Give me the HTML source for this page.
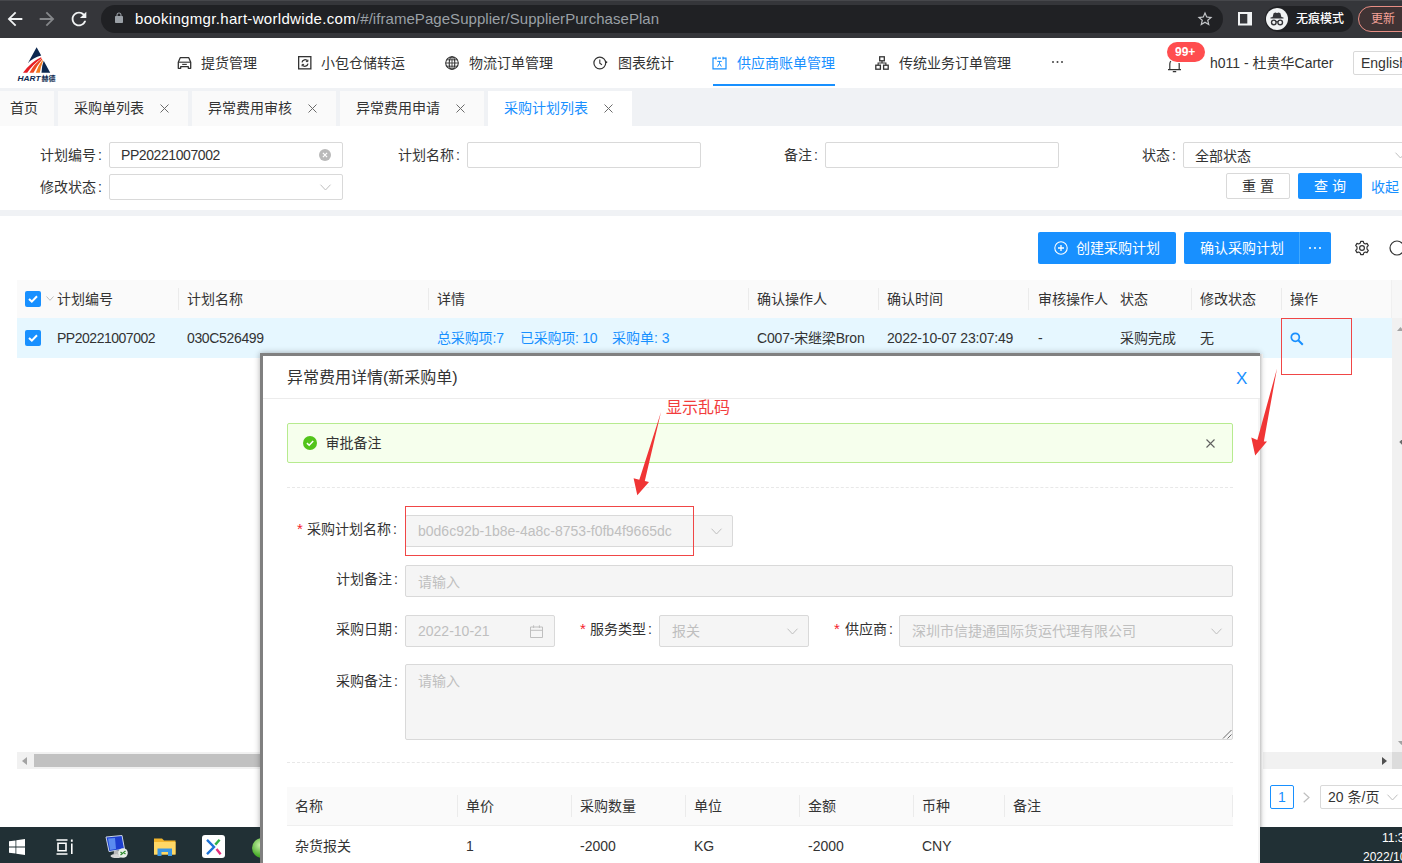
<!DOCTYPE html>
<html lang="zh-CN">
<head>
<meta charset="utf-8">
<title>采购计划列表</title>
<style>
*{box-sizing:border-box;margin:0;padding:0}
html,body{width:1402px;height:863px;overflow:hidden;background:#fff}
body{position:relative;font-family:"Liberation Sans","Noto Sans CJK SC",sans-serif;font-size:14px;color:#333;line-height:20px}
.a{position:absolute;white-space:nowrap}
.t{position:absolute;white-space:nowrap;font-size:14px;line-height:20px;height:20px}
.c{margin-left:2px}
.k{display:inline-block;color:inherit;white-space:nowrap}
.blue{color:#1890ff}
.ph{color:#bfbfbf}
.red{color:#f5222d}
.inp{position:absolute;border:1px solid #d9d9d9;border-radius:2px;background:#fff}
.dis{position:absolute;border:1px solid #d9d9d9;border-radius:2px;background:#f5f5f5}
.sep{position:absolute;width:1px;background:#ebebeb}
svg{position:absolute;display:block;overflow:visible}
</style>
</head>
<body>

<!-- ===== Browser chrome ===== -->
<div class="a" id="chrome" style="left:0;top:0;width:1402px;height:38px;background:#35363a"></div>
<div class="a" style="left:0;top:0;width:1402px;height:1px;background:#46474b"></div>
<svg style="left:4px;top:8px" width="22" height="22" viewBox="0 0 24 24"><path fill="#f1f3f4" d="M20 11H7.83l5.59-5.59L12 4l-8 8 8 8 1.41-1.41L7.83 13H20v-2z"/></svg>
<svg style="left:36px;top:8px" width="22" height="22" viewBox="0 0 24 24"><path fill="#85878a" d="M4 11h12.17l-5.59-5.59L12 4l8 8-8 8-1.41-1.41L16.17 13H4v-2z"/></svg>
<svg style="left:68px;top:8px" width="22" height="22" viewBox="0 0 24 24"><path fill="#f1f3f4" d="M17.65 6.35C16.2 4.9 14.21 4 12 4c-4.42 0-7.99 3.58-7.99 8s3.57 8 7.99 8c3.73 0 6.84-2.55 7.73-6h-2.08c-.82 2.33-3.04 4-5.65 4-3.31 0-6-2.69-6-6s2.69-6 6-6c1.66 0 3.14.69 4.22 1.78L13 11h7V4l-2.35 2.35z"/></svg>
<div class="a" style="left:101px;top:5px;width:1122px;height:28px;border-radius:14px;background:#202124"></div>
<svg style="left:113px;top:12px" width="12" height="12" viewBox="0 0 24 24"><path fill="#9aa0a6" d="M18 8h-1V6c0-2.76-2.24-5-5-5S7 3.24 7 6v2H6c-1.1 0-2 .9-2 2v10c0 1.1.9 2 2 2h12c1.1 0 2-.9 2-2V10c0-1.1-.9-2-2-2zM9 6c0-1.66 1.34-3 3-3s3 1.340 3 3v2H9V6z"/></svg>
<div class="t" id="url" style="left:135px;top:8px;font-size:15px;line-height:22px;height:22px;color:#9aa0a6"><span id="url1" style="color:#fff;letter-spacing:0.32px">bookingmgr.hart-worldwide.com</span><span id="url2" style="letter-spacing:0.05px">/#/iframePageSupplier/SupplierPurchasePlan</span></div>
<svg style="left:1196px;top:10px" width="18" height="18" viewBox="0 0 24 24"><path fill="#c4c7ca" d="M22 9.24l-7.19-.62L12 2 9.190 8.630 2 9.240l5.460 4.730L5.820 21 12 17.270 18.180 21l-1.630-7.030L22 9.240zM12 15.400l-3.760 2.270 1-4.280-3.320-2.880 4.380-.38L12 6.100l1.710 4.040 4.380.38-3.320 2.880 1 4.280L12 15.400z"/></svg>
<svg style="left:1238px;top:12px" width="14" height="14" viewBox="0 0 14 14"><rect x="1" y="1" width="12" height="11.500" fill="none" stroke="#f1f3f4" stroke-width="2"/><rect x="9.300" y="1" width="3.700" height="11.500" fill="#f1f3f4"/></svg>
<div class="a" style="left:1265px;top:6px;width:88px;height:26px;border-radius:13px;background:#202124"></div>
<div class="a" style="left:1266px;top:8px;width:22px;height:22px;border-radius:11px;background:#f1f3f4"></div>
<svg style="left:1269px;top:11px" width="16" height="16" viewBox="0 0 16 16"><path fill="#35363a" d="M4.600 2.200 L6.200 1.400 L8 2 L9.800 1.400 L11.400 2.200 L12.400 6 L14.500 6.600 L14.500 7.600 L1.500 7.600 L1.500 6.600 L3.600 6 Z"/><circle cx="4.800" cy="11.400" r="2.300" fill="none" stroke="#35363a" stroke-width="1.400"/><circle cx="11.200" cy="11.400" r="2.300" fill="none" stroke="#35363a" stroke-width="1.400"/><path d="M7 11 Q8 10.200 9 11" fill="none" stroke="#35363a" stroke-width="1.200"/></svg>
<div class="t" id="incog" style="left:1296px;top:9px;font-size:12px;color:#fff;font-weight:500"><span class="k" style="width:48px">无痕模式</span></div>
<div class="a" style="left:1358px;top:6px;width:60px;height:26px;border-radius:13px;border:1px solid #e88e84;background:#403334"></div>
<div class="t" id="upd" style="left:1371px;top:9px;font-size:12px;color:#f4a198"><span class="k" style="width:24px">更新</span></div>

<!-- ===== App header ===== -->
<div class="a" style="left:0;top:38px;width:1402px;height:50px;background:#fff;box-shadow:0 1px 3px rgba(0,21,41,.10)"></div>
<svg style="left:16px;top:45px" width="42" height="40" viewBox="16 45 42 40">
<path fill="#0d2850" d="M36.600 47.200 L41.200 55.600 Q33 58 28 63 Z"/>
<path fill="#0d2850" d="M43.700 60.700 L50.200 72.800 L41.500 72.800 Q41.600 66 43.700 60.700 Z"/>
<path fill="#e61f26" d="M23 72.800 Q31 62 41 57.300 L41.600 58.200 Q33 64 27.200 72.800 Z"/>
<path fill="#ee4a23" d="M29.400 72.800 Q34.500 63.500 41.900 58.600 L42.300 59.600 Q37 65.500 33.500 72.800 Z"/>
<path fill="#f47b20" d="M35.800 72.800 Q38.500 65 42.500 60 L43 61 Q40.800 66.500 39.800 72.800 Z"/>
<text x="17.600" y="81.400" font-family="Liberation Sans, sans-serif" font-size="7.600" font-weight="bold" font-style="italic" fill="#0d2850" textLength="23" lengthAdjust="spacingAndGlyphs">HART</text>
<text x="41.600" y="81.300" font-family="Liberation Sans, Noto Sans CJK SC, sans-serif" font-size="7" font-weight="bold" fill="#0d2850">赫德</text>
</svg>
<!-- menu 1: car -->
<svg style="left:177px;top:56px" width="15" height="14" viewBox="0 0 15 14" fill="none" stroke="#333" stroke-width="1.300"><path d="M1.300 6.200 L3.200 1.700 H11.800 L13.700 6.200 V12.300 H11.300 V10.600 H3.700 V12.300 H1.300 Z" stroke-linejoin="round"/><path d="M1.300 6.200 H13.700" stroke-width="1.100"/><path d="M5.200 8.400 H9.800" stroke-width="1.100"/></svg>
<div class="t" id="m1" style="left:201px;top:53px"><span class="k" style="width:56px">提货管理</span></div>
<!-- menu 2: sync box -->
<svg style="left:298px;top:56px" width="14" height="14" viewBox="0 0 14 14" fill="none" stroke="#333" stroke-width="1.300"><rect x="0.650" y="0.650" width="12.200" height="12.200"/><path d="M4 6.300 A3 3 0 0 1 9.600 5.300 M10 7.700 A3 3 0 0 1 4.400 8.700" stroke-width="1.200"/><path d="M9.900 3.600 V5.600 H7.900 M4.100 10.400 V8.400 H6.100" stroke-width="1"/></svg>
<div class="t" id="m2" style="left:321px;top:53px"><span class="k" style="width:84px">小包仓储转运</span></div>
<!-- menu 3: globe -->
<svg style="left:445px;top:56px" width="14" height="14" viewBox="0 0 14 14" fill="none" stroke="#333" stroke-width="1.100"><circle cx="7" cy="7" r="6.300"/><ellipse cx="7" cy="7" rx="2.800" ry="6.300"/><path d="M7 .7 V13.300 M.7 7 H13.300 M1.600 3.800 H12.400 M1.600 10.200 H12.400" stroke-width=".9"/></svg>
<div class="t" id="m3" style="left:469px;top:53px"><span class="k" style="width:84px">物流订单管理</span></div>
<!-- menu 4: history clock -->
<svg style="left:593px;top:56px" width="15" height="14" viewBox="0 0 15 14" fill="none" stroke="#333" stroke-width="1.200"><circle cx="6.800" cy="7" r="5.900"/><path d="M6.800 3.600 V7.300 L9 8.800" stroke-width="1.100"/><path d="M12.200 6.200 H14.200" stroke-width="1.600"/></svg>
<div class="t" id="m4" style="left:618px;top:53px"><span class="k" style="width:56px">图表统计</span></div>
<!-- menu 5: schedule (active) -->
<svg style="left:712px;top:56px" width="15" height="14" viewBox="0 0 15 14" fill="none" stroke="#1890ff" stroke-width="1.200"><path d="M4 2.200 H1 V12.800 H14 V2.200 H11"/><path d="M4 .8 V3.600 M11 .8 V3.600 M6 2.200 H9" /><path d="M5.200 5.400 H9.800 M7.500 5.400 V7 M5.600 10.600 L7.500 7.400 L9.400 10.600" stroke-width="1"/></svg>
<div class="t blue" id="m5" style="left:737px;top:53px"><span class="k" style="width:98px">供应商账单管理</span></div>
<div class="a" style="left:713px;top:84px;width:122px;height:2px;background:#1890ff"></div>
<!-- menu 6: cluster -->
<svg style="left:875px;top:56px" width="14" height="14" viewBox="0 0 14 14" fill="none" stroke="#333" stroke-width="1.300"><rect x="4.700" y=".8" width="4.600" height="4"/><rect x=".8" y="9.200" width="4.600" height="4"/><rect x="8.600" y="9.200" width="4.600" height="4"/><path d="M7 4.800 V7 M3.100 9.200 V7 H10.900 V9.200" stroke-width="1.100"/></svg>
<div class="t" id="m6" style="left:899px;top:53px"><span class="k" style="width:112px">传统业务订单管理</span></div>
<div class="a" style="left:1052px;top:61px;width:2.400px;height:2.400px;border-radius:2px;background:#444;box-shadow:4.500px 0 0 #444,9px 0 0 #444"></div>
<!-- bell + badge -->
<svg style="left:1167px;top:57px" width="15" height="16" viewBox="0 0 15 16" fill="none" stroke="#333" stroke-width="1.200"><path d="M2.800 12.600 V7 A4.700 4.700 0 0 1 12.200 7 V12.600 M1 12.600 H14 M5.800 14.600 H9.200"/></svg>
<div class="a" style="left:1167px;top:42px;width:38px;height:20px;border-radius:10px;background:#ff4d4f;box-shadow:0 0 0 1px #fff"></div>
<div class="t" id="badge" style="left:1175px;top:42px;font-size:12px;color:#fff;font-weight:bold">99+</div>
<div class="t" id="user" style="left:1210px;top:53px">h011 - <span class="k" style="width:42px">杜贵华</span>Carter</div>
<div class="inp" style="left:1353px;top:51px;width:80px;height:24px"></div>
<div class="t" id="eng" style="left:1361px;top:53px">English</div>


<!-- ===== Tabs bar ===== -->
<div class="a" style="left:0;top:88px;width:1402px;height:38px;background:#f0f2f5"></div>
<div class="a" style="left:0;top:91px;width:54px;height:35px;background:#fafafa"></div>
<div class="a" style="left:58px;top:91px;width:130px;height:35px;background:#fafafa"></div>
<div class="a" style="left:192px;top:91px;width:144px;height:35px;background:#fafafa"></div>
<div class="a" style="left:340px;top:91px;width:144px;height:35px;background:#fafafa"></div>
<div class="a" style="left:488px;top:91px;width:144px;height:35px;background:#fff"></div>
<div class="t" id="tb1" style="left:10px;top:98px"><span class="k" style="width:28px">首页</span></div>
<div class="t" id="tb2" style="left:74px;top:98px"><span class="k" style="width:70px">采购单列表</span></div>
<div class="t" id="tb3" style="left:208px;top:98px"><span class="k" style="width:84px">异常费用审核</span></div>
<div class="t" id="tb4" style="left:356px;top:98px"><span class="k" style="width:84px">异常费用申请</span></div>
<div class="t blue" id="tb5" style="left:504px;top:98px"><span class="k" style="width:84px">采购计划列表</span></div>
<svg style="left:160px;top:104px" width="9" height="9" viewBox="0 0 9 9" stroke="#6b6b6b" stroke-width="1"><path d="M.5 .5 L8.500 8.500 M8.500 .5 L.5 8.500"/></svg>
<svg style="left:308px;top:104px" width="9" height="9" viewBox="0 0 9 9" stroke="#6b6b6b" stroke-width="1"><path d="M.5 .5 L8.500 8.500 M8.500 .5 L.5 8.500"/></svg>
<svg style="left:456px;top:104px" width="9" height="9" viewBox="0 0 9 9" stroke="#6b6b6b" stroke-width="1"><path d="M.5 .5 L8.500 8.500 M8.500 .5 L.5 8.500"/></svg>
<svg style="left:604px;top:104px" width="9" height="9" viewBox="0 0 9 9" stroke="#6b6b6b" stroke-width="1"><path d="M.5 .5 L8.500 8.500 M8.500 .5 L.5 8.500"/></svg>


<!-- ===== Filter panel ===== -->
<div class="a" style="left:0;top:126px;width:1402px;height:84px;background:#fff"></div>
<div class="a" style="left:0;top:210px;width:1402px;height:6px;background:#f0f2f5"></div>
<div class="t" id="f1" style="left:40px;top:145px"><span class="k" style="width:56px">计划编号</span><span class="c">:</span></div>
<div class="inp" style="left:109px;top:142px;width:234px;height:26px"></div>
<div class="t" id="f1v" style="letter-spacing:-0.41px;left:121px;top:145px">PP20221007002</div>
<svg style="left:319px;top:149px" width="12" height="12" viewBox="0 0 12 12"><circle cx="6" cy="6" r="6" fill="#b9b9b9"/><path d="M3.900 3.900 L8.100 8.100 M8.100 3.900 L3.900 8.100" stroke="#fff" stroke-width="1.200"/></svg>
<div class="t" id="f2" style="left:398px;top:145px"><span class="k" style="width:56px">计划名称</span><span class="c">:</span></div>
<div class="inp" style="left:467px;top:142px;width:234px;height:26px"></div>
<div class="t" id="f3" style="left:784px;top:145px"><span class="k" style="width:28px">备注</span><span class="c">:</span></div>
<div class="inp" style="left:825px;top:142px;width:234px;height:26px"></div>
<div class="t" id="f4" style="left:1142px;top:145px"><span class="k" style="width:28px">状态</span><span class="c">:</span></div>
<div class="inp" style="left:1183px;top:142px;width:234px;height:26px"></div>
<div class="t" id="f4v" style="left:1195px;top:146px"><span class="k" style="width:56px">全部状态</span></div>
<svg style="left:1395px;top:152px" width="11" height="7" viewBox="0 0 11 7" fill="none" stroke="#bfbfbf" stroke-width="1"><path d="M.5 .7 L5.500 6 L10.500 .7"/></svg>
<div class="t" id="f5" style="left:40px;top:177px"><span class="k" style="width:56px">修改状态</span><span class="c">:</span></div>
<div class="inp" style="left:109px;top:174px;width:234px;height:26px"></div>
<svg style="left:320px;top:184px" width="11" height="7" viewBox="0 0 11 7" fill="none" stroke="#bfbfbf" stroke-width="1"><path d="M.5 .7 L5.500 6 L10.500 .7"/></svg>
<div class="inp" style="left:1226px;top:173px;width:64px;height:26px"></div>
<div class="t" id="b1" style="left:1242px;top:176px;letter-spacing:4px"><span class="k" style="width:36px">重置</span></div>
<div class="a" style="left:1298px;top:173px;width:64px;height:26px;border-radius:2px;background:#1890ff"></div>
<div class="t" id="b2" style="left:1314px;top:176px;letter-spacing:4px;color:#fff"><span class="k" style="width:36px">查询</span></div>
<div class="t blue" id="b3" style="left:1371px;top:177px"><span class="k" style="width:28px">收起</span></div>


<!-- ===== Table panel ===== -->
<div class="a" style="left:1038px;top:232px;width:138px;height:32px;border-radius:2px;background:#1890ff"></div>
<svg style="left:1054px;top:241px" width="14" height="14" viewBox="0 0 14 14" fill="none" stroke="#fff" stroke-width="1.100"><circle cx="7" cy="7" r="6.200"/><path d="M7 4 V10 M4 7 H10" stroke-width="1.300"/></svg>
<div class="t" id="c1" style="left:1076px;top:238px;color:#fff"><span class="k" style="width:84px">创建采购计划</span></div>
<div class="a" style="left:1184px;top:232px;width:147px;height:32px;border-radius:2px;background:#1890ff"></div>
<div class="a" style="left:1299px;top:232px;width:1px;height:32px;background:#40a9ff"></div>
<div class="t" id="c2" style="left:1200px;top:238px;color:#fff"><span class="k" style="width:84px">确认采购计划</span></div>
<div class="a" style="left:1309px;top:247px;width:2px;height:2px;border-radius:1px;background:#fff;box-shadow:5px 0 0 #fff,10px 0 0 #fff"></div>
<svg style="left:1354px;top:240px" width="16" height="16" viewBox="0 0 16 16" fill="none" stroke="#333" stroke-width="1.200"><circle cx="8" cy="8" r="2.400"/><path d="M6.700 1.300 H9.300 L9.700 3.100 L11.300 4 L13 3.400 L14.300 5.600 L13 6.900 V9.100 L14.300 10.400 L13 12.600 L11.300 12 L9.700 12.900 L9.300 14.700 H6.700 L6.300 12.900 L4.700 12 L3 12.600 L1.700 10.400 L3 9.100 V6.900 L1.700 5.600 L3 3.400 L4.700 4 L6.300 3.100 Z" stroke-linejoin="round"/></svg>
<svg style="left:1389px;top:240px" width="16" height="16" viewBox="0 0 16 16" fill="none" stroke="#333" stroke-width="1.200"><circle cx="8" cy="8" r="7"/></svg>
<div class="a" style="left:17px;top:280px;width:1375px;height:38px;background:#fafafa"></div>
<div class="a" style="left:17px;top:318px;width:1375px;height:40px;background:#e6f7ff"></div>
<div class="a" style="left:1391px;top:280px;width:11px;height:38px;background:#f7f7f7;border-left:1px solid #f0f0f0"></div>
<div class="a" style="left:1392px;top:318px;width:10px;height:451px;background:#f1f1f1"></div>
<div class="sep" style="left:178px;top:288px;height:22px"></div><div class="sep" style="left:428px;top:288px;height:22px"></div><div class="sep" style="left:748px;top:288px;height:22px"></div><div class="sep" style="left:878px;top:288px;height:22px"></div><div class="sep" style="left:1028px;top:288px;height:22px"></div><div class="sep" style="left:1191px;top:288px;height:22px"></div><div class="sep" style="left:1281px;top:288px;height:22px"></div><div class="a" style="left:25px;top:291px;width:16px;height:16px;border-radius:2px;background:#1890ff"></div><svg style="left:28px;top:295px" width="10" height="8" viewBox="0 0 10 8" fill="none" stroke="#fff" stroke-width="2"><path d="M1 4 L3.800 6.600 L9 1.200"/></svg><div class="a" style="left:25px;top:330px;width:16px;height:16px;border-radius:2px;background:#1890ff"></div><svg style="left:28px;top:334px" width="10" height="8" viewBox="0 0 10 8" fill="none" stroke="#fff" stroke-width="2"><path d="M1 4 L3.800 6.600 L9 1.200"/></svg>
<svg style="left:46px;top:296px" width="8" height="5" viewBox="0 0 8 5" fill="none" stroke="#bfbfbf" stroke-width="1"><path d="M.5 .5 L4 4.300 L7.500 .5"/></svg>
<div class="t" id="h1" style="left:57px;top:289px"><span class="k" style="width:56px">计划编号</span></div>
<div class="t" id="h2" style="left:187px;top:289px"><span class="k" style="width:56px">计划名称</span></div>
<div class="t" id="h3" style="left:437px;top:289px"><span class="k" style="width:28px">详情</span></div>
<div class="t" id="h4" style="left:757px;top:289px"><span class="k" style="width:70px">确认操作人</span></div>
<div class="t" id="h5" style="left:887px;top:289px"><span class="k" style="width:56px">确认时间</span></div>
<div class="t" id="h6" style="left:1038px;top:289px"><span class="k" style="width:70px">审核操作人</span></div>
<div class="t" id="h7" style="left:1120px;top:289px"><span class="k" style="width:28px">状态</span></div>
<div class="t" id="h8" style="left:1200px;top:289px"><span class="k" style="width:56px">修改状态</span></div>
<div class="t" id="h9" style="left:1290px;top:289px"><span class="k" style="width:28px">操作</span></div>
<div class="t" id="r1" style="letter-spacing:-0.48px;left:57px;top:328px">PP20221007002</div>
<div class="t" id="r2" style="letter-spacing:-0.35px;left:187px;top:328px">030C526499</div>
<div class="t blue" id="r3" style="letter-spacing:-0.15px;left:437px;top:328px"><span class="k" style="width:55.41px">总采购项</span>:7</div>
<div class="t blue" id="r4" style="letter-spacing:-0.25px;left:520px;top:328px"><span class="k" style="width:55px">已采购项</span>: 10</div>
<div class="t blue" id="r5" style="left:612px;top:328px"><span class="k" style="width:42px">采购单</span>: 3</div>
<div class="t" id="r6" style="letter-spacing:-0.18px;left:757px;top:328px">C007-<span class="k" style="width:41.48px">宋继梁</span>Bron</div>
<div class="t" id="r7" style="letter-spacing:-0.2px;left:887px;top:328px">2022-10-07 23:07:49</div>
<div class="t" id="r8" style="left:1038px;top:328px">-</div>
<div class="t" id="r9" style="left:1120px;top:328px"><span class="k" style="width:56px">采购完成</span></div>
<div class="t" id="r10" style="left:1200px;top:328px"><span class="k" style="width:14px">无</span></div>
<svg style="left:1290px;top:332px" width="14" height="14" viewBox="0 0 14 14" fill="none" stroke="#1890ff" stroke-width="1.700"><circle cx="5.300" cy="5.300" r="4"/><path d="M8.300 8.300 L12.800 12.800" stroke-width="2"/></svg>
<svg style="left:1397px;top:327px" width="7" height="4" viewBox="0 0 7 4"><path d="M0 4 L3.500 0 L7 4 Z" fill="#a3a3a3"/></svg>
<svg style="left:1398px;top:741px" width="7" height="4" viewBox="0 0 7 4"><path d="M0 0 L3.500 4 L7 0 Z" fill="#a3a3a3"/></svg>
<div class="a" style="left:1401px;top:438px;width:8px;height:8px;background:#6a6a6a;transform:rotate(45deg)"></div>
<!-- h scrollbar -->
<div class="a" style="left:17px;top:752px;width:1375px;height:17px;background:#f1f1f1"></div>
<div class="a" style="left:34px;top:754px;width:1000px;height:13px;background:#c1c1c1"></div>
<div class="a" style="left:1392px;top:752px;width:10px;height:17px;background:#dcdcdc"></div>
<svg style="left:22px;top:757px" width="5" height="8" viewBox="0 0 5 8"><path d="M5 0 L0 4 L5 8 Z" fill="#a3a3a3"/></svg>
<svg style="left:1382px;top:757px" width="5" height="8" viewBox="0 0 5 8"><path d="M0 0 L5 4 L0 8 Z" fill="#505050"/></svg>
<!-- pagination -->
<div class="a" style="left:1270px;top:785px;width:24px;height:24px;border:1px solid #1890ff;border-radius:2px;background:#fff"></div>
<div class="t blue" id="pg1" style="left:1278px;top:787px">1</div>
<svg style="left:1303px;top:792px" width="7" height="11" viewBox="0 0 7 11" fill="none" stroke="#bfbfbf" stroke-width="1.200"><path d="M.7 .7 L6 5.500 L.7 10.300"/></svg>
<div class="inp" style="left:1320px;top:785px;width:100px;height:24px"></div>
<div class="t" id="pg2" style="left:1328px;top:787px">20 <span class="k" style="width:14.02px">条</span>/<span class="k" style="width:14.02px">页</span></div>
<svg style="left:1387px;top:794px" width="11" height="7" viewBox="0 0 11 7" fill="none" stroke="#bfbfbf" stroke-width="1"><path d="M.5 .7 L5.500 6 L10.500 .7"/></svg>


<!-- ===== Modal ===== -->
<div class="a" id="modal" style="left:260px;top:353px;width:1000px;height:510px;background:#fff;border-left:3px solid #808080;border-top:3px solid #808080;box-shadow:0 0 6px rgba(0,0,0,.32)"></div>
<div class="a" style="left:1258px;top:399px;width:2px;height:464px;background:#f4f4f4"></div>
<div class="a" style="left:1260px;top:354px;width:3px;height:509px;background:linear-gradient(to right,#c6c6c6,#e2e2e2 60%,#f3f3f3)"></div>
<div class="t" id="mt" style="left:287px;top:366px;font-size:16px;line-height:24px;height:24px"><span class="k" style="width:96px">异常费用详情</span>(<span class="k" style="width:64px">新采购单</span>)</div>
<div class="t blue" id="mx" style="left:1236px;top:367px;font-size:17px;line-height:24px;height:24px">X</div>
<div class="a" style="left:263px;top:398px;width:997px;height:1px;background:#ececec"></div>
<div class="a" style="left:287px;top:423px;width:946px;height:40px;border:1px solid #b7eb8f;border-radius:2px;background:#f6ffed"></div>
<svg style="left:303px;top:436px" width="14" height="14" viewBox="0 0 14 14"><circle cx="7" cy="7" r="7" fill="#52c41a"/><path d="M3.900 7.100 L6.200 9.300 L10.200 4.900" fill="none" stroke="#fff" stroke-width="1.500"/></svg>
<div class="t" id="al" style="left:325.500px;top:433px"><span class="k" style="width:56px">审批备注</span></div>
<svg style="left:1206px;top:439px" width="9" height="9" viewBox="0 0 9 9" stroke="#606060" stroke-width="1.100"><path d="M.5 .5 L8.500 8.500 M8.500 .5 L.5 8.500"/></svg>
<div class="a" style="left:287px;top:487px;width:946px;height:0;border-top:1px dashed #e8e8e8"></div>
<!-- row 1 -->
<div class="t red" style="left:297px;top:519px;font-size:15px">*</div>
<div class="t" id="l1" style="left:307px;top:519px"><span class="k" style="width:84px">采购计划名称</span><span class="c">:</span></div>
<div class="dis" style="left:405px;top:515px;width:328px;height:32px"></div>
<div class="t ph" id="v1" style="left:418px;top:521px">b0d6c92b-1b8e-4a8c-8753-f0fb4f9665dc</div>
<svg style="left:711px;top:528px" width="11" height="7" viewBox="0 0 11 7" fill="none" stroke="#bfbfbf" stroke-width="1"><path d="M.5 .7 L5.500 6 L10.500 .7"/></svg>
<!-- row 2 -->
<div class="t" id="l2" style="left:336px;top:569px"><span class="k" style="width:56px">计划备注</span><span class="c">:</span></div>
<div class="dis" style="left:405px;top:565px;width:828px;height:32px"></div>
<div class="t ph" id="v2" style="left:418px;top:572px"><span class="k" style="width:42px">请输入</span></div>
<!-- row 3 -->
<div class="t" id="l3" style="left:336px;top:619px"><span class="k" style="width:56px">采购日期</span><span class="c">:</span></div>
<div class="dis" style="left:405px;top:615px;width:150px;height:32px"></div>
<div class="t ph" id="v3" style="left:418px;top:621px">2022-10-21</div>
<svg style="left:530px;top:625px" width="13" height="13" viewBox="0 0 13 13" fill="none" stroke="#bfbfbf" stroke-width="1"><path d="M.5 2 H12.500 V12.500 H.5 Z M.5 5.300 H12.500 M3.600 .3 V3 M9.400 .3 V3"/></svg>
<div class="t red" style="left:580px;top:619px;font-size:15px">*</div>
<div class="t" id="l4" style="left:590px;top:619px"><span class="k" style="width:56px">服务类型</span><span class="c">:</span></div>
<div class="dis" style="left:659px;top:615px;width:150px;height:32px"></div>
<div class="t ph" id="v4" style="left:672px;top:621px"><span class="k" style="width:28px">报关</span></div>
<svg style="left:787px;top:628px" width="11" height="7" viewBox="0 0 11 7" fill="none" stroke="#bfbfbf" stroke-width="1"><path d="M.5 .7 L5.500 6 L10.500 .7"/></svg>
<div class="t red" style="left:834px;top:619px;font-size:15px">*</div>
<div class="t" id="l5" style="left:845px;top:619px"><span class="k" style="width:42px">供应商</span><span class="c">:</span></div>
<div class="dis" style="left:899px;top:615px;width:334px;height:32px"></div>
<div class="t ph" id="v5" style="left:912px;top:621px"><span class="k" style="width:224px">深圳市信捷通国际货运代理有限公司</span></div>
<svg style="left:1211px;top:628px" width="11" height="7" viewBox="0 0 11 7" fill="none" stroke="#bfbfbf" stroke-width="1"><path d="M.5 .7 L5.500 6 L10.500 .7"/></svg>
<!-- row 4 -->
<div class="t" id="l6" style="left:336px;top:671px"><span class="k" style="width:56px">采购备注</span><span class="c">:</span></div>
<div class="dis" style="left:405px;top:664px;width:828px;height:76px"></div>
<div class="t ph" id="v6" style="left:418px;top:671px"><span class="k" style="width:42px">请输入</span></div>
<svg style="left:1222px;top:729px" width="10" height="10" viewBox="0 0 10 10" stroke="#6b6b6b" stroke-width="1"><path d="M1 9.500 L9.500 1 M5.500 9.500 L9.500 5.500"/></svg>
<div class="a" style="left:287px;top:762px;width:946px;height:0;border-top:1px dashed #e8e8e8"></div>
<!-- inner table -->
<div class="a" style="left:287px;top:787px;width:946px;height:39px;background:#fafafa;border-bottom:1px solid #efefef"></div>
<div class="sep" style="left:457px;top:795px;height:22px"></div><div class="sep" style="left:571px;top:795px;height:22px"></div><div class="sep" style="left:685px;top:795px;height:22px"></div><div class="sep" style="left:799px;top:795px;height:22px"></div><div class="sep" style="left:913px;top:795px;height:22px"></div><div class="sep" style="left:1004px;top:795px;height:22px"></div><div class="sep" style="left:1232px;top:795px;height:22px"></div>
<div class="t" id="ih1" style="left:295px;top:796px"><span class="k" style="width:28px">名称</span></div>
<div class="t" id="ih2" style="left:466px;top:796px"><span class="k" style="width:28px">单价</span></div>
<div class="t" id="ih3" style="left:580px;top:796px"><span class="k" style="width:56px">采购数量</span></div>
<div class="t" id="ih4" style="left:694px;top:796px"><span class="k" style="width:28px">单位</span></div>
<div class="t" id="ih5" style="left:808px;top:796px"><span class="k" style="width:28px">金额</span></div>
<div class="t" id="ih6" style="left:922px;top:796px"><span class="k" style="width:28px">币种</span></div>
<div class="t" id="ih7" style="left:1013px;top:796px"><span class="k" style="width:28px">备注</span></div>
<div class="t" id="ir1" style="left:295px;top:836px"><span class="k" style="width:56px">杂货报关</span></div>
<div class="t" id="ir2" style="left:466px;top:836px">1</div>
<div class="t" id="ir3" style="left:580px;top:836px">-2000</div>
<div class="t" id="ir4" style="left:694px;top:836px">KG</div>
<div class="t" id="ir5" style="left:808px;top:836px">-2000</div>
<div class="t" id="ir6" style="left:922px;top:836px">CNY</div>


<!-- ===== Red annotations ===== -->
<div class="a" style="left:1281px;top:318px;width:71px;height:57px;border:1px solid #f04646"></div>
<div class="a" style="left:405px;top:506px;width:289px;height:50px;border:1px solid #f04646"></div>
<div class="t" id="an" style="left:666px;top:397px;font-size:16px;line-height:22px;height:22px;color:#f23c3c"><span class="k" style="width:64px">显示乱码</span></div>
<svg style="left:0;top:0" width="1402" height="863" viewBox="0 0 1402 863"><path fill="#f03535" d="M661 412 L644.800 481 L649 482 L637.300 495.300 L633.600 478.200 L639.300 479.800 Z"/><path fill="#f03535" d="M1277 368.500 L1263.800 441.600 L1267 441.500 L1255.200 455.600 L1251.300 437.600 L1257.300 440 Z"/></svg>


<!-- ===== Taskbar ===== -->
<div class="a" style="left:0;top:827px;width:260px;height:36px;background:#213035;overflow:hidden"><div class="a" style="left:252px;top:11px;width:20px;height:20px;border-radius:10px;background:radial-gradient(circle at 40% 35%,#c8f0a8,#4caf2c 60%,#2e8a1e)"></div></div>
<div class="a" style="left:1260px;top:827px;width:142px;height:36px;background:#213035"></div>
<svg style="left:9px;top:839px" width="16" height="16" viewBox="0 0 16 16" fill="#fff"><path d="M0 2.300 L6.500 1.400 V7.600 H0 Z M7.300 1.300 L16 0 V7.600 H7.300 Z M0 8.400 H6.500 V14.600 L0 13.700 Z M7.300 8.400 H16 V16 L7.300 14.700 Z"/></svg>
<svg style="left:56px;top:839px" width="18" height="16" viewBox="0 0 18 16" fill="none" stroke="#fff" stroke-width="1.600"><path d="M0.500 1 H11.500 M0.500 15 H11.500 M2 4.300 H10 V11.700 H2 Z M15.800 4.500 V15" /><path d="M15.800 0.500 V2.800" stroke-width="1.800"/></svg>
<svg style="left:105px;top:835px" width="24" height="24" viewBox="0 0 24 24"><path d="M1 2 L17 0.500 L19.500 14 L4 16.500 Z" fill="#1d3fd0"/><path d="M3 3.500 L10 3 L11 14 L5 15 Z" fill="#5b8cf0"/><path d="M1 2 L17 0.500 L19.500 14 L4 16.500 Z" fill="none" stroke="#c8d4e6" stroke-width="1"/><path d="M9 16 L14 15.500 L14.500 19 L8.500 20 Z" fill="#b9b9b9"/><ellipse cx="11.500" cy="21" rx="6" ry="2" fill="#d6d6d6"/><circle cx="18" cy="18" r="4.800" fill="#e9efe9"/><path d="M15.500 17 L17.500 18.500 L15.500 20 M20.500 16 L18.500 17.500 L20.500 19" stroke="#2c8a2c" stroke-width="1.200" fill="none"/></svg>
<svg style="left:154px;top:837px" width="22" height="20" viewBox="0 0 22 20"><path d="M0 1.500 H8 L10 3.500 H21.500 V17.500 H0 Z" fill="#f2b52d"/><path d="M0 5 H21.500 V17.500 H0 Z" fill="#ffd866"/><path d="M3.500 11.500 H18 V19 H14 V15 H7.500 V19 H3.500 Z" fill="#3a95e4"/></svg>
<div class="a" style="left:202px;top:835px;width:23px;height:23px;border-radius:3px;background:#fff"></div>
<svg style="left:202px;top:835px" width="23" height="23" viewBox="0 0 23 23" fill="none" stroke-width="2.400"><path d="M5 4.800 L12 12 L5 19.200" stroke="#1d74d8"/><path d="M17.600 4.800 L13.300 9.600" stroke="#2fb24a"/><path d="M14.500 14 L18.600 19.200" stroke="#e62e7b"/></svg>
<div class="t" id="clk1" style="left:1382px;top:828px;font-size:12px;color:#fff">11:32</div>
<div class="t" id="clk2" style="left:1363px;top:847px;font-size:12px;color:#fff">2022/10</div>

</body>
</html>
